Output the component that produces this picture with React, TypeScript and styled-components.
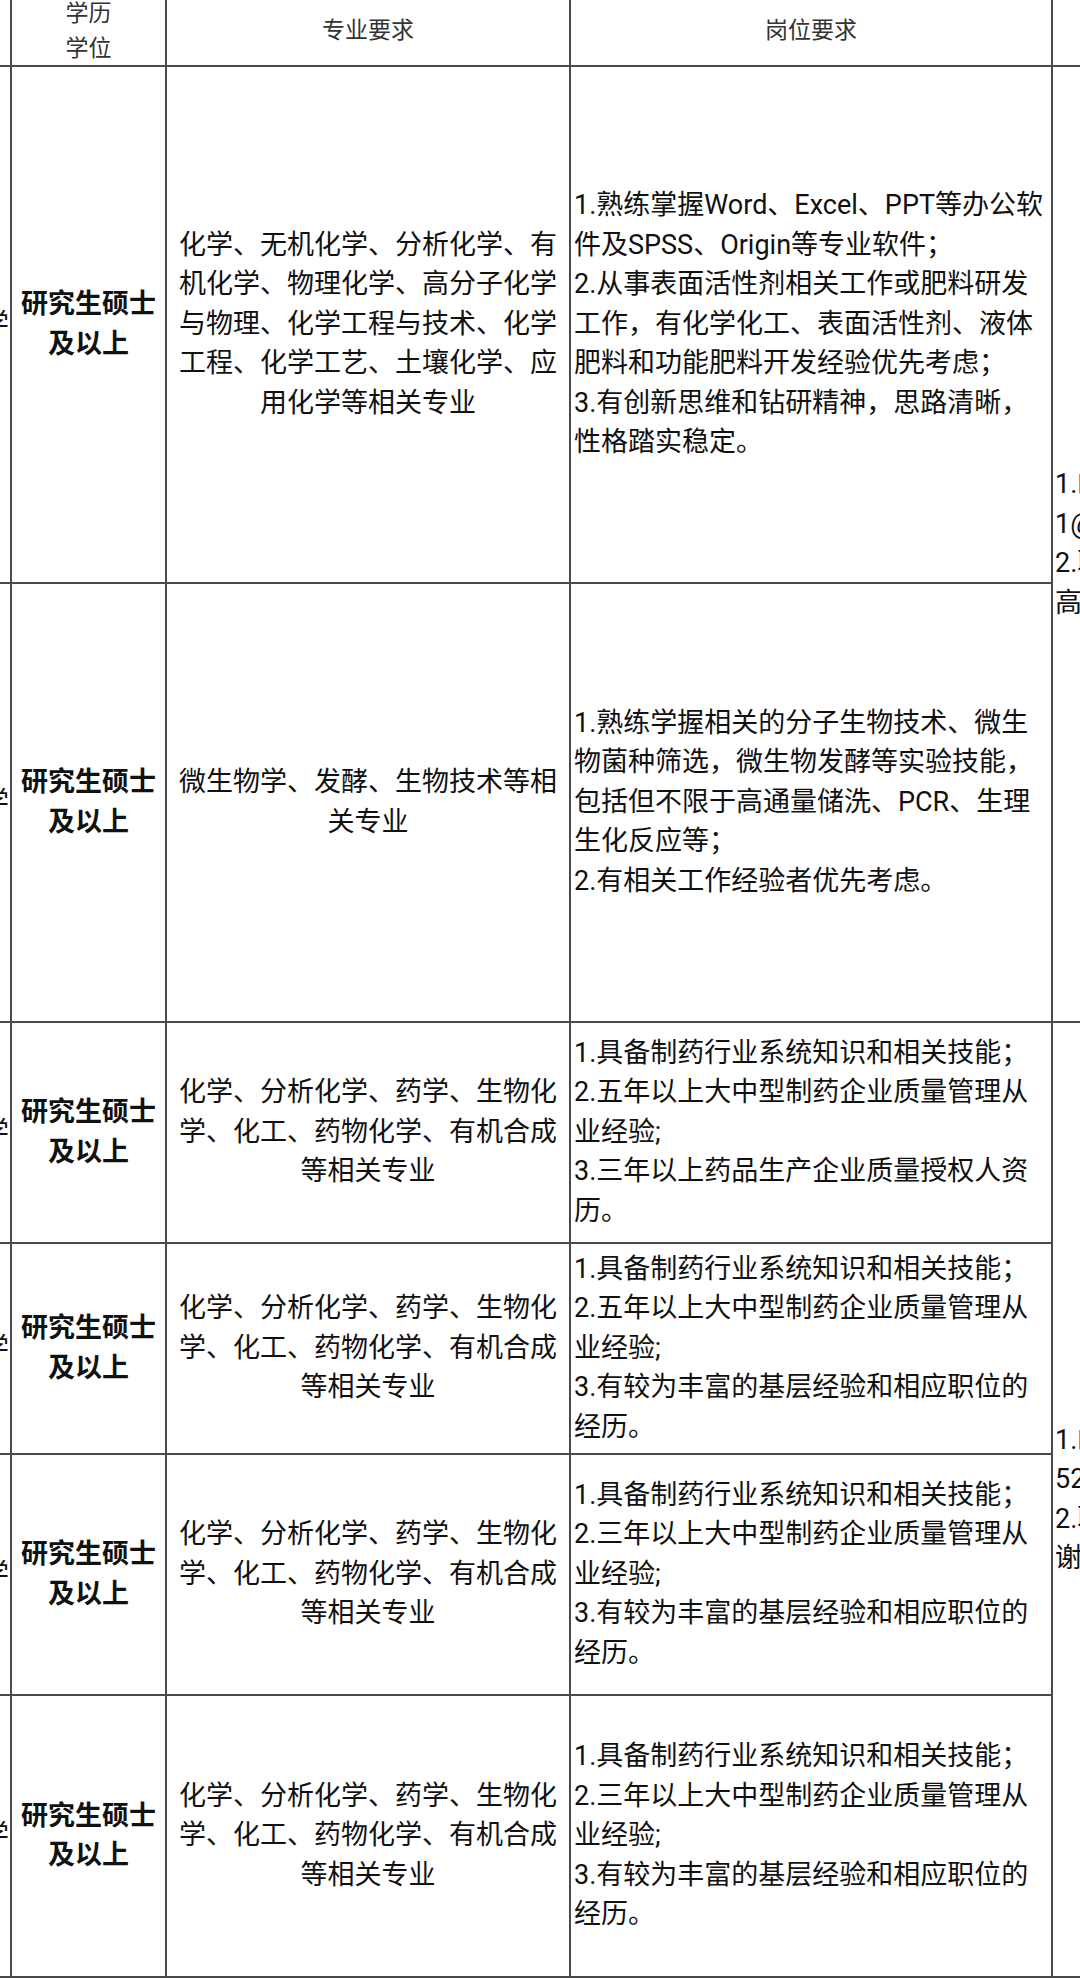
import React from "react";
import styled, { createGlobalStyle } from "styled-components";

const GlobalStyle = createGlobalStyle`
  html, body {
    margin: 0;
    padding: 0;
    background: #ffffff;
    overflow: hidden;
  }
  body {
    font-family: "Roboto", "Noto Sans CJK SC", sans-serif;
    color: #111111;
  }
`;

const Page = styled.div`
  width: 1080px;
  height: 1979px;
  overflow: hidden;
  background: #ffffff;
`;

const Sheet = styled.div`
  display: grid;
  grid-template-columns: 100px 153px 402px 480px 300px;
  grid-template-rows: 69px 515px 437px 219px 209px 239px 280px;
  gap: 2px;
  padding: 2px;
  background: #4a4a4a;
  width: max-content;
  margin: -6px 0 0 -92px;
`;

const Cell = styled.div`
  background: #ffffff;
  display: flex;
  align-items: center;
  font-size: 27px;
  line-height: 39.5px;
  overflow: hidden;
`;

const HeadCell = styled(Cell)`
  justify-content: center;
  text-align: center;
  font-size: 23px;
  line-height: 35px;
  color: #333333;
`;

const EdgeCell = styled(Cell)`
  justify-content: flex-end;
  padding-right: 1px;
  white-space: nowrap;
`;

const DegreeCell = styled(Cell)`
  justify-content: center;
  text-align: center;
  font-weight: 700;
  padding: 0 6px;
`;

const MajorCell = styled(Cell)`
  justify-content: center;
  text-align: center;
  padding: 0 5px;
`;

const DutyCell = styled(Cell)`
  padding: 0 3px;
`;

const DutyList = styled.div`
  width: 100%;
`;

const Duty = styled.div`
  text-align: left;
`;

const ContactCell = styled(Cell)<{ $span: number }>`
  grid-row: span ${(p) => p.$span};
  padding-left: 2px;
  white-space: nowrap;
`;

type Job = {
  field: string;
  major: string;
  duties: string[];
};

const degree = "研究生硕士及以上";

const pharmaMajor =
  "化学、分析化学、药学、生物化学、化工、药物化学、有机合成等相关专业";

const jobs: Job[] = [
  {
    field: "应用化学",
    major:
      "化学、无机化学、分析化学、有机化学、物理化学、高分子化学与物理、化学工程与技术、化学工程、化学工艺、土壤化学、应用化学等相关专业",
    duties: [
      "1.熟练掌握Word、Excel、PPT等办公软件及SPSS、Origin等专业软件；",
      "2.从事表面活性剂相关工作或肥料研发工作，有化学化工、表面活性剂、液体肥料和功能肥料开发经验优先考虑；",
      "3.有创新思维和钻研精神，思路清晰，性格踏实稳定。",
    ],
  },
  {
    field: "微生物学",
    major: "微生物学、发酵、生物技术等相关专业",
    duties: [
      "1.熟练学握相关的分子生物技术、微生物菌种筛选，微生物发酵等实验技能，包括但不限于高通量储洗、PCR、生理生化反应等；",
      "2.有相关工作经验者优先考虑。",
    ],
  },
  {
    field: "药学",
    major: pharmaMajor,
    duties: [
      "1.具备制药行业系统知识和相关技能；",
      "2.五年以上大中型制药企业质量管理从业经验;",
      "3.三年以上药品生产企业质量授权人资历。",
    ],
  },
  {
    field: "药学",
    major: pharmaMajor,
    duties: [
      "1.具备制药行业系统知识和相关技能；",
      "2.五年以上大中型制药企业质量管理从业经验;",
      "3.有较为丰富的基层经验和相应职位的经历。",
    ],
  },
  {
    field: "药学",
    major: pharmaMajor,
    duties: [
      "1.具备制药行业系统知识和相关技能；",
      "2.三年以上大中型制药企业质量管理从业经验;",
      "3.有较为丰富的基层经验和相应职位的经历。",
    ],
  },
  {
    field: "药学",
    major: pharmaMajor,
    duties: [
      "1.具备制药行业系统知识和相关技能；",
      "2.三年以上大中型制药企业质量管理从业经验;",
      "3.有较为丰富的基层经验和相应职位的经历。",
    ],
  },
];

// contact column is only partly on screen, one cell covers several rows
const contacts: Record<number, { span: number; lines: string[] }> = {
  0: {
    span: 2,
    lines: ["1.邮箱：hr202", "1@163.com", "2.联系人：", "高女士"],
  },
  2: {
    span: 4,
    lines: ["1.邮箱：qa20", "52@163.com", "2.联系人：", "谢先生"],
  },
};

const App: React.FC = () => {
  return (
    <Page>
      <GlobalStyle />
      <Sheet>
        <HeadCell>岗位</HeadCell>
        <HeadCell>
          学历
          <br />
          学位
        </HeadCell>
        <HeadCell>专业要求</HeadCell>
        <HeadCell>岗位要求</HeadCell>
        <HeadCell>联系方式</HeadCell>

        {jobs.map((job, i) => (
          <React.Fragment key={i}>
            <EdgeCell>{job.field}</EdgeCell>
            <DegreeCell>{degree}</DegreeCell>
            <MajorCell>{job.major}</MajorCell>
            <DutyCell>
              <DutyList>
                {job.duties.map((d, j) => (
                  <Duty key={j}>{d}</Duty>
                ))}
              </DutyList>
            </DutyCell>
            {contacts[i] && (
              <ContactCell $span={contacts[i].span}>
                <div>
                  {contacts[i].lines.map((l, k) => (
                    <div key={k}>{l}</div>
                  ))}
                </div>
              </ContactCell>
            )}
          </React.Fragment>
        ))}
      </Sheet>
    </Page>
  );
};

export default App;
